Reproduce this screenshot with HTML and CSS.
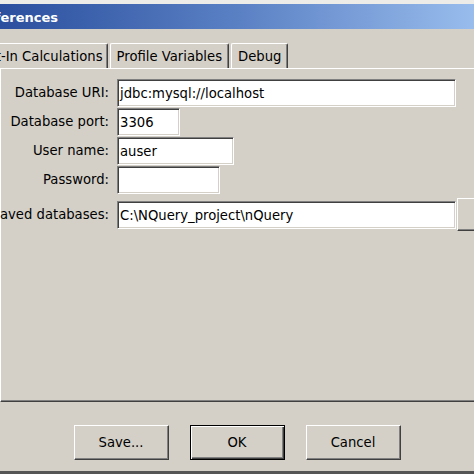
FILE: index.html
```html
<!DOCTYPE html>
<html>
<head>
<meta charset="utf-8">
<link rel="stylesheet" href="styles.css">
</head>
<body>
<div class="window">
  <div class="titlebar"><span class="title">Preferences</span></div>
  <div class="tabs">
    <div class="tab first">Built-In Calculations</div>
    <div class="tab">Profile Variables</div>
    <div class="tab">Debug</div>
  </div>
  <div class="panel">
    <div class="form">
      <div class="label">Database URI:</div>
      <div class="field w-uri">jdbc:mysql://localhost</div>
      <div class="label">Database port:</div>
      <div class="field w-port">3306</div>
      <div class="label">User name:</div>
      <div class="field w-user">auser</div>
      <div class="label">Password:</div>
      <div class="field w-pass"></div>
      <div class="label last">Saved databases:</div>
      <div class="saved last">
        <div class="field w-uri">C:\NQuery_project\nQuery</div>
        <div class="browse"></div>
      </div>
    </div>
  </div>
  <div class="buttons">
    <div class="btn">Save...</div>
    <div class="btn default">OK</div>
    <div class="btn">Cancel</div>
  </div>
</div>
</body>
</html>
```
FILE: styles.css
```css
html, body {
  margin: 0;
  padding: 0;
  background: #d4d0c8;
}
body {
  width: 474px;
  height: 474px;
  overflow: hidden;
  font-family: "DejaVu Sans", Verdana, sans-serif;
  font-size: 13.2px;
  color: #000;
}
.window {
  width: 474px;
  height: 474px;
  box-sizing: border-box;
  border-top: 4px solid #eeece8;
  border-bottom: 3px solid #555;
  background: #d4d0c8;
  display: flex;
  flex-direction: column;
  overflow: hidden;
}
.titlebar {
  height: 25px;
  flex: none;
  background: linear-gradient(90deg, #2b4f9e 0%, #5a80c4 50%, #98bcec 100%);
  overflow: hidden;
  white-space: nowrap;
}
.title {
  display: block;
  margin-left: -30px;
  font-weight: bold;
  font-size: 13px;
  line-height: 28px;
  color: #fff;
}
.tabs {
  display: flex;
  gap: 2px;
  margin-top: 14px;
  margin-left: -36px;
  height: 25px;
  flex: none;
  white-space: nowrap;
}
.tab {
  box-sizing: border-box;
  height: 25px;
  padding: 1px 6px 0;
  line-height: 23px;
  border-top: 1px solid #fff;
  border-left: 1px solid #fff;
  border-right: 1px solid #404040;
  box-shadow: inset -1px 0 #808080;
  border-radius: 2px 2px 0 0;
}
.tab.first {
  padding-right: 4px;
}
.panel {
  flex: none;
  height: 334px;
  box-sizing: border-box;
  border-top: 1px solid #fff;
  border-left: 1px solid #fff;
  border-bottom: 1px solid #404040;
  box-shadow: inset 0 -1px #808080;
  padding-top: 10px;
}
.form {
  display: grid;
  grid-template-columns: 129px 1fr;
  column-gap: 8px;
  row-gap: 1px;
  margin-left: -21px;
  align-items: center;
}
.label {
  text-align: right;
  line-height: 16px;
  white-space: nowrap;
}
.last {
  margin-top: 3px;
}
.field {
  box-sizing: border-box;
  height: 28px;
  background: #fff;
  border: 1px solid;
  border-color: #808080 #fff #fff #808080;
  box-shadow: inset 1px 1px #404040, inset -1px -1px #d4d0c8;
  padding: 2px 0 0 2px;
  line-height: 24px;
  white-space: nowrap;
  overflow: hidden;
}
.w-uri { width: 339px; }
.w-port { width: 63px; }
.w-user { width: 117px; }
.w-pass { width: 103px; }
.saved {
  display: flex;
  align-items: center;
  gap: 1px;
}
.browse {
  box-sizing: border-box;
  width: 60px;
  height: 33px;
  flex: none;
  border: 1px solid;
  border-color: #fff #404040 #404040 #fff;
  box-shadow: inset -1px -1px #808080;
}
.buttons {
  display: flex;
  justify-content: center;
  gap: 21px;
  padding-top: 23px;
}
.btn {
  box-sizing: border-box;
  width: 95px;
  height: 35px;
  border: 1px solid;
  border-color: #fff #404040 #404040 #fff;
  box-shadow: inset -1px -1px #808080;
  text-align: center;
  line-height: 33px;
}
.btn.default {
  border: 1px solid #000;
  box-shadow: inset 1px 1px #fff, inset -1px -1px #404040, inset -2px -2px #808080;
}
```
